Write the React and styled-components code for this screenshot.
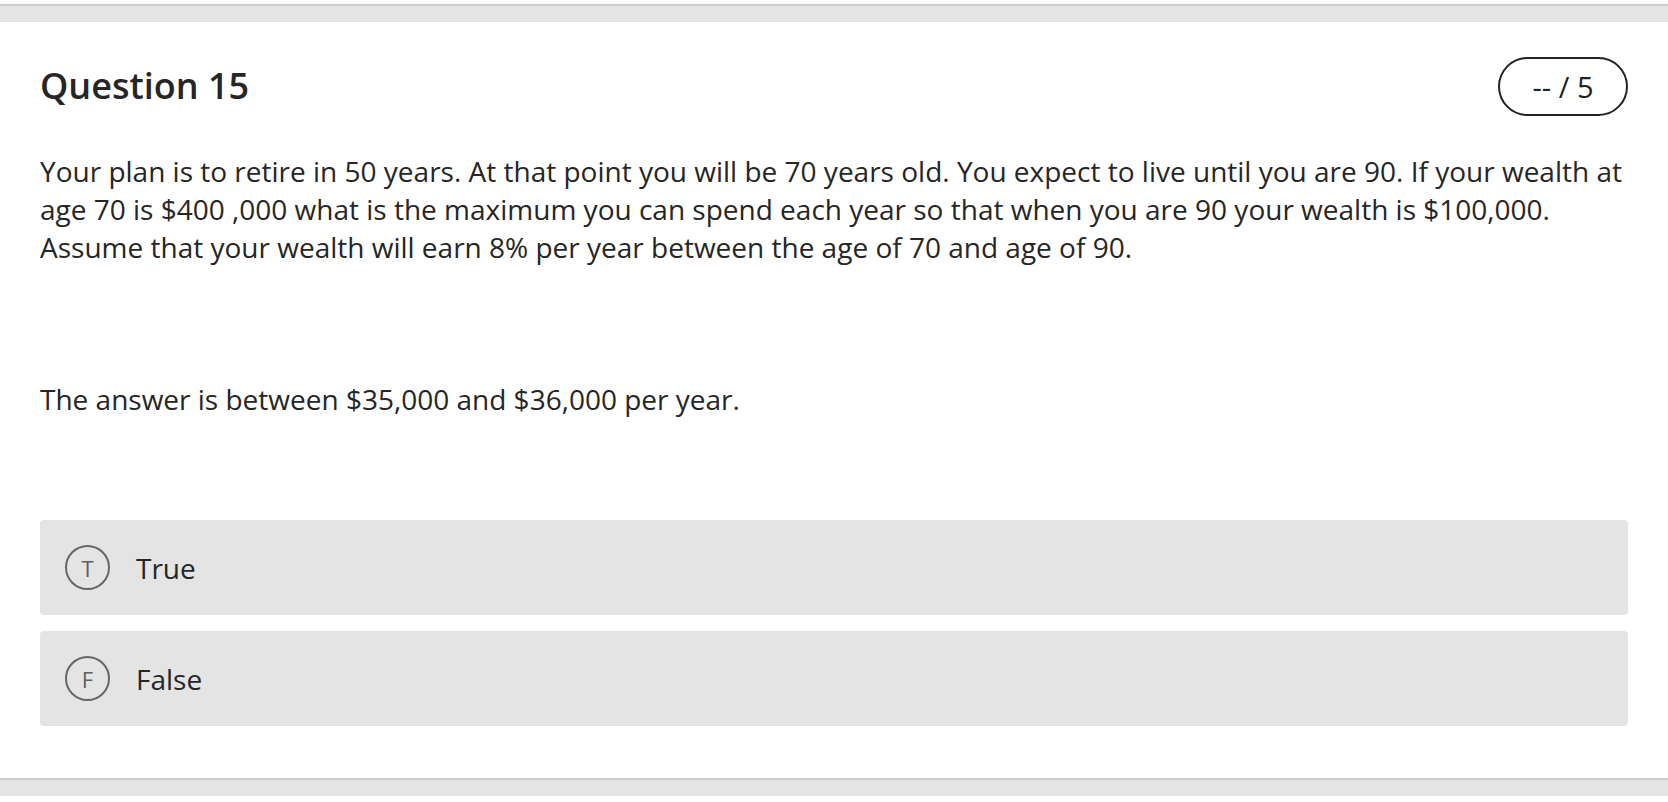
import React from "react";
import styled, { createGlobalStyle } from "styled-components";

const GlobalStyle = createGlobalStyle`
  html, body {
    margin: 0;
    padding: 0;
    background: #fff;
  }
  body {
    font-family: "Open Sans", "Noto Sans", sans-serif;
    color: #262626;
  }
`;

const Page = styled.div`
  width: 1668px;
  padding-top: 4px;
  box-sizing: border-box;
  background: #fff;
`;

const Strip = styled.div`
  height: 16px;
  background: #e4e4e4;
  border-top: 2px solid #cdcdcd;
`;

const Card = styled.section`
  padding: 35px 40px 52px;
  display: flex;
  flex-direction: column;
`;

const Header = styled.div`
  display: flex;
  justify-content: space-between;
  align-items: center;
  height: 59px;
`;

const Title = styled.h2`
  margin: 0;
  font-size: 36px;
  font-weight: 600;
  color: #262626;
  line-height: 1.3;
`;

const Score = styled.div`
  box-sizing: border-box;
  width: 130px;
  height: 59px;
  border: 2px solid #222;
  border-radius: 30px;
  display: flex;
  align-items: center;
  justify-content: center;
  font-size: 29px;
  color: #222;
`;

const Text = styled.p`
  margin: ${(p) => p.$top || 0}px 0 0;
  font-size: 28px;
  line-height: 38px;
  color: #262626;
`;

const Options = styled.div`
  margin-top: 102px;
  display: flex;
  flex-direction: column;
  gap: 16px;
`;

const Option = styled.div`
  height: 95px;
  background: #e4e4e4;
  border-radius: 4px;
  display: flex;
  align-items: center;
  padding-left: 25px;
  gap: 26px;
`;

const Badge = styled.span`
  box-sizing: border-box;
  width: 45px;
  height: 45px;
  border-radius: 50%;
  border: 2px solid #666;
  color: #5e5e5e;
  font-size: 22px;
  display: flex;
  align-items: center;
  justify-content: center;
`;

const Label = styled.span`
  font-size: 28px;
  color: #262626;
`;

export default function App() {
  return (
    <>
      <GlobalStyle />
      <Page>
        <Strip />
        <Card>
          <Header>
            <Title>Question 15</Title>
            <Score>-- / 5</Score>
          </Header>
          <Text $top={36}>
            Your plan is to retire in 50 years. At that point you will be 70 years old. You expect to live until you are 90. If your wealth at age 70 is $400 ,000 what is the maximum you can spend each year so that when you are 90 your wealth is $100,000. Assume that your wealth will earn 8% per year between the age of 70 and age of 90.
          </Text>
          <Text $top={114}>The answer is between $35,000 and $36,000 per year.</Text>
          <Options>
            <Option>
              <Badge>T</Badge>
              <Label>True</Label>
            </Option>
            <Option>
              <Badge>F</Badge>
              <Label>False</Label>
            </Option>
          </Options>
        </Card>
        <Strip />
      </Page>
    </>
  );
}
